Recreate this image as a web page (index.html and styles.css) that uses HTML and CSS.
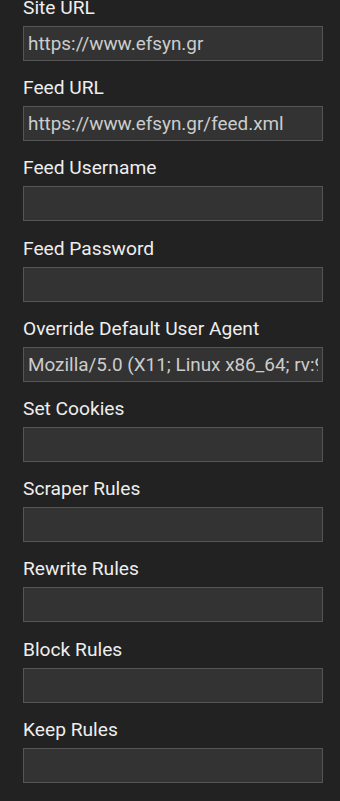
FILE: index.html
```html
<!DOCTYPE html>
<html>
<head>
<meta charset="utf-8">
<link rel="stylesheet" href="styles.css">
</head>
<body>
<form class="form">
  <div class="field"><label class="label">Site URL</label><input class="input" type="text" value="https://www.efsyn.gr"></div>
  <div class="field"><label class="label">Feed URL</label><input class="input" type="text" value="https://www.efsyn.gr/feed.xml"></div>
  <div class="field"><label class="label">Feed Username</label><input class="input" type="text" value=""></div>
  <div class="field"><label class="label">Feed Password</label><input class="input" type="password" value=""></div>
  <div class="field"><label class="label">Override Default User Agent</label><input class="input" type="text" value="Mozilla/5.0 (X11; Linux x86_64; rv:91.0) Gecko/20100101 Firefox/91.0"></div>
  <div class="field"><label class="label">Set Cookies</label><input class="input" type="text" value=""></div>
  <div class="field"><label class="label">Scraper Rules</label><input class="input" type="text" value=""></div>
  <div class="field"><label class="label">Rewrite Rules</label><input class="input" type="text" value=""></div>
  <div class="field"><label class="label">Block Rules</label><input class="input" type="text" value=""></div>
  <div class="field"><label class="label">Keep Rules</label><input class="input" type="text" value=""></div>
</form>
</body>
</html>
```
FILE: styles.css
```css
html, body {
  margin: 0;
  padding: 0;
  background: #222222;
}
body {
  font-family: Roboto, "Liberation Sans", sans-serif;
  height: 801px;
  overflow: hidden;
}
.form {
  padding: 0 17px 0 23px;
  display: flex;
  flex-direction: column;
}
.field {
  display: flex;
  flex-direction: column;
  margin-bottom: 19.2px;
}
.label {
  display: block;
  font-size: 19.2px;
  line-height: 16px;
  color: #eeeeee;
  margin-bottom: 10px;
}
.input {
  box-sizing: border-box;
  width: 300px;
  height: 35px;
  margin: 0;
  padding: 0 4px;
  border: 1px solid #555555;
  border-radius: 0;
  background: #333333;
  color: #cccccc;
  font-family: Roboto, "Liberation Sans", sans-serif;
  font-size: 18.9px;
  outline: none;
}
```
